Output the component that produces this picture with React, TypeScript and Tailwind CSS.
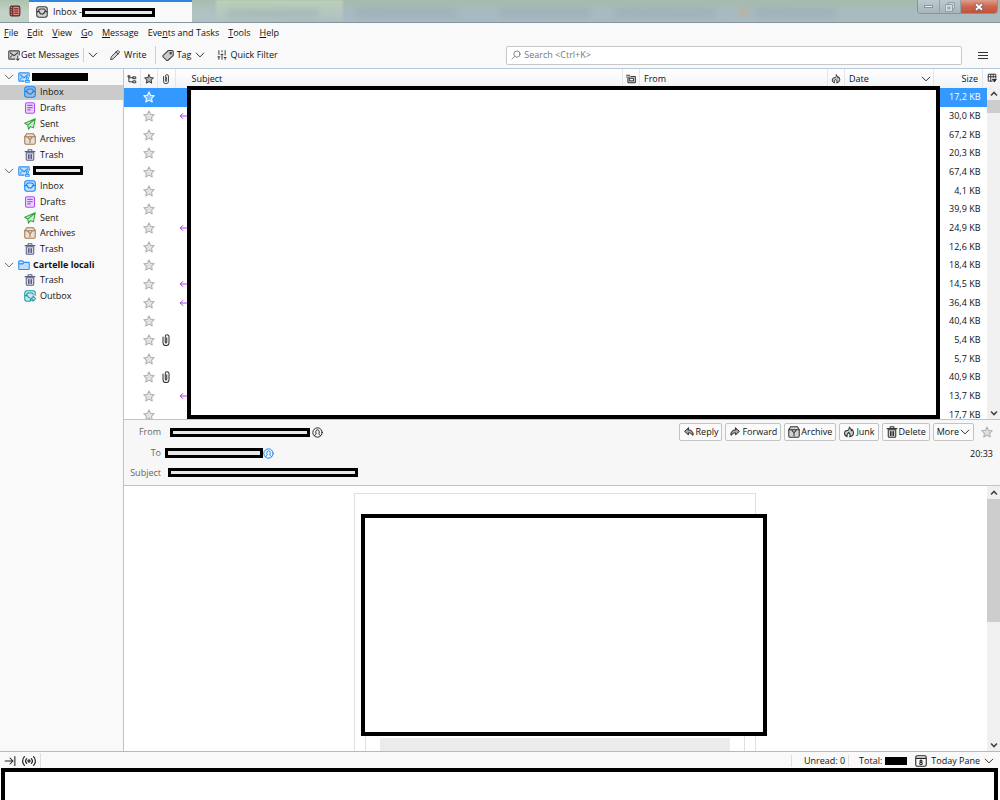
import React from 'react';
import clsx from 'clsx';

interface IconProps {
  className?: string;
}

interface Folder {
  name: string;
  icon: React.FC<IconProps>;
}

interface Message {
  size: string;
  replied?: boolean;
  attachment?: boolean;
}

const Svg: React.FC<IconProps & { children: React.ReactNode }> = ({ className, children }) => (
  <svg
    viewBox="0 0 16 16"
    className={clsx('shrink-0', className)}
    fill="none"
    stroke="currentColor"
    strokeWidth="1.4"
    strokeLinecap="round"
    strokeLinejoin="round"
    aria-hidden="true"
  >
    {children}
  </svg>
);

const InboxIcon: React.FC<IconProps> = ({ className = 'size-3 text-[#0a84ff]' }) => (
  <Svg className={className}>
    <rect x="1" y="1" width="14" height="14" rx="3" fill="currentColor" fillOpacity="0.2" />
    <path d="M1.500 7.500h3c.3 2 1.700 3.200 3.500 3.200s3.200-1.200 3.500-3.200h3M3.500 7V5.500L5.500 4h5l2 1.500V7" />
  </Svg>
);

const DraftsIcon: React.FC<IconProps> = () => (
  <Svg className="size-3 text-[#b04df5]">
    <rect x="2" y="1" width="12" height="14" rx="2" fill="currentColor" fillOpacity="0.2" />
    <path d="M5 4.500h6M5 7.500h6M5 10.500h3.500" />
  </Svg>
);

const SentIcon: React.FC<IconProps> = () => (
  <Svg className="size-3 text-[#2ca53a]">
    <path
      d="M15 1 1 7l4 2.500L6 15l2.500-3.500L12.500 13zM15 1 5 9.500"
      fill="currentColor"
      fillOpacity="0.2"
    />
  </Svg>
);

const ArchiveIcon: React.FC<IconProps> = ({ className = 'size-3 text-[#a17a4e]' }) => (
  <Svg className={className}>
    <path d="M3.500 1h9L15 5v8a2 2 0 0 1-2 2H3a2 2 0 0 1-2-2V5z" fill="currentColor" fillOpacity="0.2" />
    <path d="M1 5h14M5 5.500 8 9l3-3.500M8 9v4" />
  </Svg>
);

const TrashIcon: React.FC<IconProps> = ({ className = 'size-3 text-[#5d5d85]' }) => (
  <Svg className={className}>
    <path
      d="M3 5h10v8.500a1.500 1.500 0 0 1-1.500 1.500h-7A1.500 1.500 0 0 1 3 13.500z"
      fill="currentColor"
      fillOpacity="0.2"
    />
    <path d="M1.500 3.500h13M5.500 3V1h5v2M6 7.500v5M8 7.500v5M10 7.500v5" />
  </Svg>
);

const OutboxIcon: React.FC<IconProps> = () => (
  <Svg className="size-3 text-[#1a9bac]">
    <path d="M7 15H4a3 3 0 0 1-3-3V4a3 3 0 0 1 3-3h8a3 3 0 0 1 3 3v3" fill="currentColor" fillOpacity="0.2" />
    <path d="M1.500 7.500h3c.3 1.500 1.500 2.500 3 2.700M3.500 7V5.500L5.500 4h5l2 1.500M8 15c0-3 1.500-4.500 4-4.500V8l3.500 3.500L12 15v-2.200c-1.800 0-3 .7-4 2.200z" />
  </Svg>
);

const FolderIcon: React.FC<IconProps> = () => (
  <Svg className="size-3 text-[#2a90f5]">
    <path
      d="M1 13V3.500a1 1 0 0 1 1-1h4L8 4.500h6a1 1 0 0 1 1 1V13a1 1 0 0 1-1 1H2a1 1 0 0 1-1-1z"
      fill="currentColor"
      fillOpacity="0.25"
    />
    <path d="M1.500 6.500h5l1.500-2" />
  </Svg>
);

const AccountIcon: React.FC<IconProps> = () => (
  <Svg className="size-3 text-[#2a90f5]">
    <path
      d="M8 13.500H2a1 1 0 0 1-1-1v-9a1 1 0 0 1 1-1h12a1 1 0 0 1 1 1V7"
      fill="currentColor"
      fillOpacity="0.25"
    />
    <path d="m3 5 5 4 5-4M3 11l2-2" />
    <circle cx="12.500" cy="9.500" r="1.500" />
    <path d="M10 15v-1.500a1 1 0 0 1 1-1h3a1 1 0 0 1 1 1V15z" />
  </Svg>
);

const StarIcon: React.FC<IconProps> = ({ className = 'size-3 text-[#b0b0b0]' }) => (
  <Svg className={className}>
    <path
      d="m8 1.200 2.100 4.500 4.900.6-3.600 3.400.9 4.900L8 12.200l-4.300 2.400.9-4.900L1 6.300l4.900-.6z"
      fill="currentColor"
      fillOpacity="0.35"
    />
  </Svg>
);

const ClipIcon: React.FC<IconProps> = ({ className = 'size-3' }) => (
  <Svg className={clsx('text-[#333]', className)}>
    <path d="M4 4v7.500a4 4 0 0 0 8 0V3.500a2.500 2.500 0 0 0-5 0V11a1 1 0 0 0 2 0V5" />
  </Svg>
);

const ThreadIcon: React.FC<IconProps> = () => (
  <Svg className="mx-auto size-2.5 text-[#222]">
    <path d="M3 2v10.500h6M3 6h7M1 3.500h4M10 4.500h4v3h-4zM10 11h4v3h-4z" />
  </Svg>
);

const FlameIcon: React.FC<IconProps> = ({ className = 'size-3' }) => (
  <Svg className={className}>
    <path
      d="M8.500 1.500c.5 2-.5 3-2 4.500C4 5.500 2 7 2 9.700c0 2.500 1.500 4 3.500 4.600-1-2.800.5-4 2-5.800 1.500 1.500 3 3 1.500 5.800 3-.5 5-2.500 5-5.300 0-2-1-3.500-2-4.500l-.7 2C11 4.500 10 2.500 8.500 1.500z"
      fill="currentColor"
      fillOpacity="0.25"
    />
  </Svg>
);

const PersonIcon: React.FC<IconProps> = ({ className }) => (
  <Svg className={clsx('size-[11px]', className)}>
    <circle cx="8" cy="8" r="6.800" />
    <path d="M3.500 12.500c.5-1.500 2.500-1 2.700-2.500C5 9 5 4 8 4s3 5 1.800 6c.2 1.500 2.200 1 2.700 2.500" />
  </Svg>
);

const Chevron: React.FC<IconProps> = ({ className = 'size-2.5' }) => (
  <Svg className={className}>
    <path d="m2 5 6 6 6-6" />
  </Svg>
);

const ReplyIcon: React.FC<IconProps> = ({ className = 'size-2.5' }) => (
  <Svg className={className}>
    <path
      d="M7 1.500 1 7l6 5.500V9.500c3-.2 5 .5 6.500 3.500h1c.5-5-2.500-8.500-7.500-8.500z"
      fill="currentColor"
      fillOpacity="0.35"
    />
  </Svg>
);

const ACCOUNT_FOLDERS: Folder[] = [
  { name: 'Inbox', icon: InboxIcon },
  { name: 'Drafts', icon: DraftsIcon },
  { name: 'Sent', icon: SentIcon },
  { name: 'Archives', icon: ArchiveIcon },
  { name: 'Trash', icon: TrashIcon },
];

const LOCAL_FOLDERS: Folder[] = [
  { name: 'Trash', icon: TrashIcon },
  { name: 'Outbox', icon: OutboxIcon },
];

const MESSAGES: Message[] = [
  { size: '17,2 KB' },
  { size: '30,0 KB', replied: true },
  { size: '67,2 KB' },
  { size: '20,3 KB' },
  { size: '67,4 KB' },
  { size: '4,1 KB' },
  { size: '39,9 KB' },
  { size: '24,9 KB', replied: true },
  { size: '12,6 KB' },
  { size: '18,4 KB' },
  { size: '14,5 KB', replied: true },
  { size: '36,4 KB', replied: true },
  { size: '40,4 KB' },
  { size: '5,4 KB', attachment: true },
  { size: '5,7 KB' },
  { size: '40,9 KB', attachment: true },
  { size: '13,7 KB', replied: true },
  { size: '17,7 KB' },
];

// [before, access key, after]
const MENUS = [
  ['', 'F', 'ile'],
  ['', 'E', 'dit'],
  ['', 'V', 'iew'],
  ['', 'G', 'o'],
  ['', 'M', 'essage'],
  ['Eve', 'n', 'ts and Tasks'],
  ['', 'T', 'ools'],
  ['', 'H', 'elp'],
];

const Redacted: React.FC<IconProps & { solid?: boolean }> = ({ className, solid }) => (
  <span className={clsx('block shrink-0 border-[3px] border-black', solid ? 'bg-black' : 'bg-[#e8e8e8]', className)} />
);

const TitleBar: React.FC = () => (
  <header className="relative flex h-[23px] shrink-0 items-end border-b border-[#84959e] bg-linear-to-r from-[#c3d3c6] via-[#a8bac2] via-30% to-[#a9bbbf]">
    {/* Windows showing through the glass */}
    <div className="absolute inset-0 overflow-hidden">
      <div className="h-3 bg-linear-to-b from-[#a3bba3]/70 to-transparent" />
      <div className="absolute top-0 left-[216px] h-full w-[127px] bg-linear-to-b from-[#bfd2b8]/90 to-[#b2c4c4]/60 blur-[1px]" />
      <div className="absolute top-[9px] left-[228px] h-2 w-[90px] bg-[#8fa3a8]/35 blur-[3px]" />
      <div className="absolute top-[9px] left-[356px] h-2 w-[100px] bg-[#8298a2]/25 blur-[3px]" />
      <div className="absolute top-[9px] left-[500px] h-2 w-[90px] bg-[#8298a2]/25 blur-[3px]" />
      <div className="absolute top-[9px] left-[615px] h-2 w-[100px] bg-[#8298a2]/25 blur-[3px]" />
      <div className="absolute top-[8px] left-[739px] size-2 bg-[#c9ad7c]/50 blur-[2px]" />
      <div className="absolute top-[9px] left-[755px] h-2 w-[80px] bg-[#8298a2]/25 blur-[3px]" />
    </div>
    <div className="relative flex h-[22px] w-[29px] items-center justify-center">
      <Svg className="size-3 text-[#5b2222]">
        <rect x="1.500" y="1.500" width="13" height="13" rx="2" fill="#d88a84" />
        <path d="M5 2v12M7.500 5h4.500M7.500 8h4.500M7.500 11h4.500M2 5h3M2 8h3M2 11h3" />
      </Svg>
    </div>
    <div className="relative flex h-[22px] w-[163px] items-center gap-1 border-t-2 border-[#2f86e0] bg-[#f9f9fa] pl-[7px]">
      <InboxIcon className="mr-px size-3 text-[#3a3a3a]" />
      <span>Inbox -</span>
      <Redacted className="-ml-1 h-[9px] w-[73px]" />
    </div>
    <div className="relative mr-[2px] ml-auto flex h-[14px] self-start overflow-hidden rounded-b-[4px] border border-t-0 border-[#84949b]">
      <button
        aria-label="Minimize"
        className="flex w-[22px] items-center justify-center border-r border-[#93a2a9] bg-linear-to-b from-[#bccacd] to-[#a5b6bc]"
      >
        <span className="h-[3px] w-[9px] border border-[#8595a0] bg-[#e8eef0]" />
      </button>
      <button
        aria-label="Restore"
        className="flex w-[21px] items-center justify-center border-r border-[#93a2a9] bg-linear-to-b from-[#bccacd] to-[#a5b6bc]"
      >
        <Svg className="size-2.5 text-[#8595a0]">
          <path d="M5 4V1h10v10h-3" fill="#d5dfe2" />
          <path d="M1 4h11v11H1zM5 8h3v3H5z" fill="#d5dfe2" />
        </Svg>
      </button>
      <button
        aria-label="Close"
        className="flex w-[36px] items-center justify-center bg-linear-to-b from-[#dd9e8e] via-[#cc6650] to-[#c4503a]"
      >
        <svg viewBox="0 0 16 16" className="size-2.5" fill="none">
          <path d="m2 3 12 10M14 3 2 13" stroke="#6a5a60" strokeWidth="5" />
          <path d="m3 3.500 10 9M13 3.500l-10 9" stroke="#fff" strokeWidth="3" />
        </svg>
      </button>
    </div>
  </header>
);

const MenuBar: React.FC = () => (
  <nav className="flex h-[19px] shrink-0 items-center gap-[9px] bg-[#f9f9fa] px-1">
    {MENUS.map(([before, key, after]) => (
      <button key={before + key + after}>
        {before}
        <u>{key}</u>
        {after}
      </button>
    ))}
  </nav>
);

const Toolbar: React.FC = () => (
  <div className="flex h-[27px] shrink-0 items-center border-b border-[#b8c8dc] bg-[#f9f9fa] pr-3 pl-2">
    <button className="flex items-center gap-px">
      <Svg className="size-3 text-[#444]">
        <path
          d="M9 13.500H2a1 1 0 0 1-1-1v-9a1 1 0 0 1 1-1h12a1 1 0 0 1 1 1V8"
          fill="currentColor"
          fillOpacity="0.2"
        />
        <path d="m3 5 5 4 5-4M3 11l2-2M13 9.500V15M11 13l2 2 2-2" />
      </Svg>
      Get Messages
    </button>
    <button aria-label="Get messages options" className="ml-1 h-[14px] border-l border-[#d0d0d0] pl-1">
      <Chevron />
    </button>
    <button className="ml-3 flex h-[18px] items-center gap-1 border-r border-[#d0d0d0] pr-2">
      <Svg className="size-2.5 text-[#333]">
        <path
          d="M1 15l1.200-4.500L11.500 1.200a1.500 1.500 0 0 1 2 0l1.300 1.300a1.500 1.500 0 0 1 0 2L5.500 13.800zM9.500 3l3.500 3.500"
          fill="currentColor"
          fillOpacity="0.2"
        />
      </Svg>
      Write
    </button>
    <button className="ml-[6px] flex items-center gap-[3px]">
      <Svg className="size-3 text-[#444]">
        <path
          d="M8.500 2H14l1 1v5.500L8 15a1.500 1.500 0 0 1-2 0L1.500 10.500a1.500 1.500 0 0 1 0-2z"
          fill="currentColor"
          fillOpacity="0.25"
        />
        <circle cx="11.500" cy="5.500" r="1" />
      </Svg>
      Tag
      <Chevron />
    </button>
    <button className="ml-3 flex items-center gap-1">
      <Svg className="size-2.5 text-[#222]">
        <path d="M3 1v6M3 11v4M1.500 11h3M8 1v2M8 7v8M6.500 7h3M13 1v7M13 12v3M11.500 12h3" />
      </Svg>
      Quick Filter
    </button>
    <label className="ml-auto flex h-[19px] w-[46.5%] items-center gap-[3px] rounded-[2px] border border-[#c8c8c8] bg-white pl-1 text-[#777]">
      <Svg className="size-2.5">
        <circle cx="9.500" cy="6.500" r="5" />
        <path d="m5.500 10.500-4 4" />
      </Svg>
      <input
        aria-label="Search"
        placeholder="Search <Ctrl+K>"
        className="min-w-0 flex-1 bg-transparent outline-none placeholder:text-[#777]"
      />
    </label>
    <button aria-label="Application menu" className="ml-4 flex w-[10px] flex-col gap-[2px]">
      <span className="h-px bg-[#333]" />
      <span className="h-px bg-[#333]" />
      <span className="h-px bg-[#333]" />
    </button>
  </div>
);

const FolderRow: React.FC<{ folder: Folder; active?: boolean }> = ({ folder, active }) => (
  <button className={clsx('flex items-center gap-1 pl-6 text-left', active && 'bg-[#cbcbcb]')}>
    <folder.icon />
    {folder.name}
  </button>
);

const AccountRow: React.FC<{ icon: React.ReactNode; children: React.ReactNode }> = ({ icon, children }) => (
  <button className="flex items-center gap-[3px] pl-1 text-left font-bold">
    <Chevron className="mr-px size-2.5 text-[#555]" />
    {icon}
    {children}
  </button>
);

const FolderPane: React.FC = () => (
  <aside className="w-[124px] shrink-0 border-r border-[#b8c4d4] bg-[#f9f9fa]">
    <div className="grid h-[235px] auto-rows-fr">
      <AccountRow icon={<AccountIcon />}>
        <Redacted solid className="-ml-px h-2 w-14" />
      </AccountRow>
      {ACCOUNT_FOLDERS.map((folder, i) => (
        <FolderRow key={folder.name} folder={folder} active={i === 0} />
      ))}
      <AccountRow icon={<AccountIcon />}>
        <Redacted className="h-[9px] w-[50px]" />
      </AccountRow>
      {ACCOUNT_FOLDERS.map((folder) => (
        <FolderRow key={folder.name} folder={folder} />
      ))}
      <AccountRow icon={<FolderIcon />}>Cartelle locali</AccountRow>
      {LOCAL_FOLDERS.map((folder) => (
        <FolderRow key={folder.name} folder={folder} />
      ))}
    </div>
  </aside>
);

const ScrollBar: React.FC<{ thumb: string }> = ({ thumb }) => (
  <div className="flex w-[13px] shrink-0 flex-col bg-[#f0f0f0] text-[#444]">
    <span className="flex h-[13px] items-center justify-center">
      <svg viewBox="0 0 8 8" className="size-2" fill="none" stroke="currentColor" strokeWidth="1.6">
        <path d="M1 5.500 4 2.500l3 3" />
      </svg>
    </span>
    <span className={clsx('bg-[#cdcdcd]', thumb)} />
    <span className="mt-auto flex h-[13px] items-center justify-center">
      <svg viewBox="0 0 8 8" className="size-2" fill="none" stroke="currentColor" strokeWidth="1.6">
        <path d="m1 2.500 3 3 3-3" />
      </svg>
    </span>
  </div>
);

const MessageList: React.FC = () => (
  <section className="relative flex h-[350px] shrink-0 overflow-hidden bg-white">
    <table className="h-[355px] min-w-0 flex-1 table-fixed border-collapse">
      <colgroup>
        <col className="w-4" />
        <col className="w-[17px]" />
        <col className="w-[18px]" />
        <col />
        <col className="w-[17px]" />
        <col className="w-[188px]" />
        <col className="w-[17px]" />
        <col className="w-[89px]" />
        <col className="w-[53px]" />
      </colgroup>
      <thead>
        <tr className="h-[19px] bg-linear-to-b from-white to-[#f1f3f6] text-left *:border-r *:border-[#e2e5ea] *:p-0 *:font-normal">
          <th aria-label="Thread"><ThreadIcon /></th>
          <th aria-label="Starred"><StarIcon className="mx-auto size-2.5 text-[#222]" /></th>
          <th aria-label="Attachments"><ClipIcon className="mx-auto size-2.5" /></th>
          <th><span className="pl-4">Subject</span></th>
          <th aria-label="Correspondent">
            <Svg className="mx-auto size-2.5 text-[#222]">
              <path d="M3 7v7h12V4H8M1 2h5M1 5h5M6 7h6v4H6z" fill="currentColor" fillOpacity="0.2" />
            </Svg>
          </th>
          <th><span className="pl-1">From</span></th>
          <th aria-label="Junk"><FlameIcon className="mx-auto size-2.5 text-[#222]" /></th>
          <th>
            <span className="flex items-center justify-between pr-[2px] pl-1">
              Date
              <Chevron />
            </span>
          </th>
          <th><span className="block pr-2 text-right">Size</span></th>
        </tr>
      </thead>
      <tbody>
        {MESSAGES.map((message, i) => (
          <tr key={message.size} className={clsx('*:p-0', i === 0 && 'bg-[#3399ff] text-white')}>
            <td />
            <td><StarIcon className={clsx('mx-auto size-3', i === 0 ? 'text-white' : 'text-[#b0b0b0]')} /></td>
            <td>{message.attachment && <ClipIcon className="mx-auto size-3" />}</td>
            <td colSpan={5}>
              {message.replied && (
                <Svg className="ml-1 size-2.5 text-[#9f2be8]">
                  <path d="M15 8H2M6 4 2 8l4 4" />
                </Svg>
              )}
            </td>
            <td className="text-right"><span className="pr-[6px]">{message.size}</span></td>
          </tr>
        ))}
      </tbody>
    </table>
    <div className="flex pt-[18px]">
      <ScrollBar thumb="h-[13px]" />
    </div>
    <button
      aria-label="Select columns"
      className="absolute top-0 right-0 flex h-[18px] w-[18px] items-center justify-center border-l border-[#e2e5ea] bg-linear-to-b from-white to-[#f1f3f6]"
    >
      <Svg className="size-2.5 text-[#222]">
        <path d="M8 13H2V2h12v6M2 6h12M6 2v11M10 2v5" />
        <path d="M9 10h6l-3 4z" fill="currentColor" />
      </Svg>
    </button>
    <div className="absolute top-[17px] right-[60px] bottom-0 left-[63px] border-4 border-black bg-white" />
  </section>
);

const ActionButton: React.FC<{ icon?: React.ReactNode; children: React.ReactNode }> = ({ icon, children }) => (
  <button className="flex h-[18px] items-center gap-px rounded-[2px] border border-[#c4c4c4] bg-[#fbfbfb] px-[3px]">
    {icon}
    {children}
  </button>
);

const MessageHeader: React.FC = () => (
  <section className="relative h-[67px] shrink-0 border-y border-[#b8c4d4] bg-[#f7f7f7] pt-[3px]">
    <dl className="grid grid-cols-[37px_1fr] gap-x-1 *:flex *:items-center [&>dt]:justify-end [&>dt]:text-[#666]">
      <dt className="h-[18px]">From</dt>
      <dd className="gap-[2px] pl-[5px]">
        <Redacted className="h-[9px] w-[140px]" />
        <PersonIcon className="text-[#222]" />
      </dd>
      <dt className="h-6">To</dt>
      <dd>
        <Redacted className="h-[10px] w-[98px]" />
        <PersonIcon className="text-[#0a84ff]" />
      </dd>
      <dt className="h-[15px]">Subject</dt>
      <dd className="pl-[3px]">
        <Redacted className="h-[9px] w-[190px]" />
      </dd>
    </dl>
    <div className="absolute top-[3px] right-[7px] flex items-center gap-[3px]">
      <ActionButton icon={<ReplyIcon className="mx-px size-2.5" />}>Reply</ActionButton>
      <ActionButton icon={<ReplyIcon className="mx-px size-2.5 -scale-x-100" />}>Forward</ActionButton>
      <ActionButton icon={<ArchiveIcon className="size-3 text-[#333]" />}>Archive</ActionButton>
      <ActionButton icon={<FlameIcon className="size-3 text-[#333]" />}>Junk</ActionButton>
      <ActionButton icon={<TrashIcon className="size-3 text-[#333]" />}>Delete</ActionButton>
      <ActionButton>
        More
        <Chevron />
      </ActionButton>
      <button aria-label="Star message" className="ml-1">
        <StarIcon />
      </button>
    </div>
    <time className="absolute top-7 right-[7px]">20:33</time>
  </section>
);

const MessageBody: React.FC = () => (
  <section className="flex min-h-0 flex-1 bg-white">
    <div className="flex min-w-0 flex-1 justify-center pt-[7px] pr-px">
      <div className="relative flex w-[402px] flex-col border border-b-0 border-[#e0e0e0] px-[10px] pt-[21px]">
        <div className="flex flex-1 items-end border-x border-[#e0e0e0] px-[14px]">
          <div className="h-[13px] w-full bg-[#ebebeb]" />
        </div>
        <div className="absolute top-5 right-[-12px] bottom-[15px] left-[6px] border-4 border-black bg-white" />
      </div>
    </div>
    <ScrollBar thumb="h-[123px]" />
  </section>
);

const StatusBar: React.FC = () => (
  <footer className="flex h-[17px] shrink-0 items-center border-t border-[#b9b9b9] bg-[#f9f9fa] pt-px pr-[6px]">
    <div className="flex h-full items-center gap-[6px] border-r border-[#dedede] pr-1 pl-1">
      <Svg className="size-3 text-[#222]">
        <path d="M1.500 8H12M8 4l4 4-4 4M14.500 2v12" />
      </Svg>
      <Svg className="size-3.5 text-[#222]">
        <circle cx="8" cy="8" r="1.200" />
        <path d="M5.300 5.300a4 4 0 0 0 0 5.400M10.700 5.300a4 4 0 0 1 0 5.400M2.800 3a7 7 0 0 0 0 10M13.200 3a7 7 0 0 1 0 10" />
      </Svg>
    </div>
    <span className="ml-auto border-l border-[#dedede] pr-[3px] pl-3">Unread: 0</span>
    <span className="flex items-center gap-[3px] border-l border-[#dedede] pl-[10px]">
      Total:
      <Redacted solid className="h-2 w-[22px]" />
    </span>
    <button className="ml-2 flex items-center gap-1">
      <Svg className="size-3 text-[#222]">
        <path d="M3 1h10a2 2 0 0 1 2 2v10a2 2 0 0 1-2 2H3a2 2 0 0 1-2-2V3a2 2 0 0 1 2-2zM1 4.500h14" />
        <circle cx="8" cy="8.200" r="1.400" />
        <circle cx="8" cy="11.400" r="1.700" />
      </Svg>
      Today Pane
      <Chevron />
    </button>
  </footer>
);

const App: React.FC = () => (
  <div className="flex h-screen flex-col overflow-hidden bg-white font-['Open_Sans',sans-serif] text-[9px] leading-3 text-[#111]">
    <TitleBar />
    <MenuBar />
    <Toolbar />
    <main className="flex min-h-0 flex-1">
      <FolderPane />
      <div className="flex min-w-0 flex-1 flex-col">
        <MessageList />
        <MessageHeader />
        <MessageBody />
      </div>
    </main>
    <StatusBar />
    <div className="mr-[2px] ml-px h-8 shrink-0 border-4 border-b-0 border-black bg-white" />
  </div>
);

export default App;
